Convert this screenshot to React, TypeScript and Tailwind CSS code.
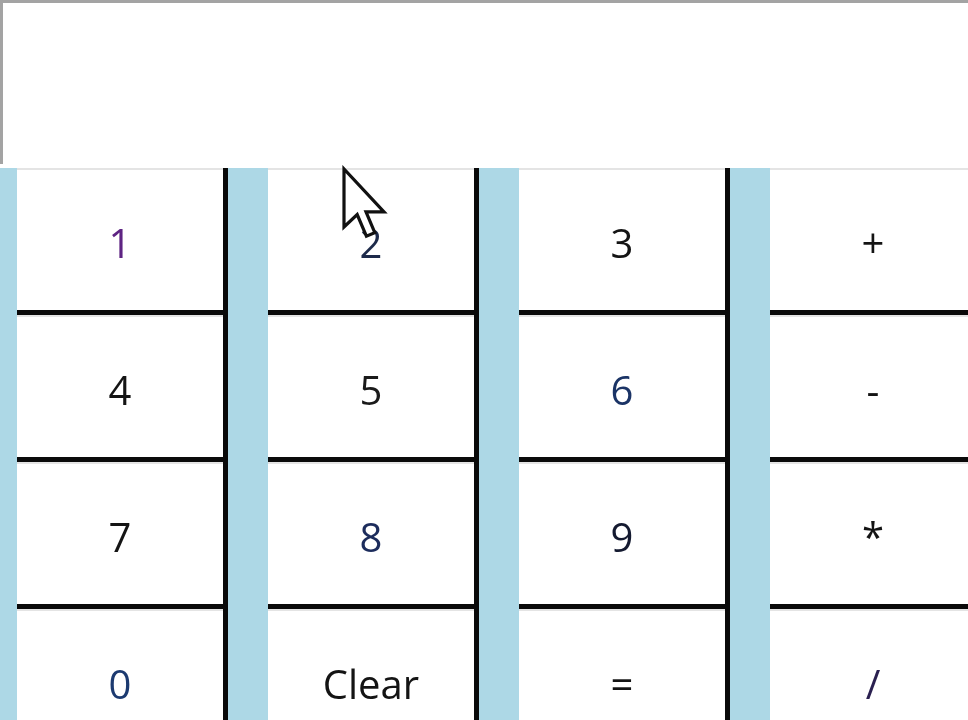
import React from "react";

const rows: { label: string; color: string }[][] = [
  [
    { label: "1", color: "text-[#5e2483]" },
    { label: "2", color: "text-[#1d2a4a]" },
    { label: "3", color: "text-[#141414]" },
    { label: "+", color: "text-[#141414]" },
  ],
  [
    { label: "4", color: "text-[#141414]" },
    { label: "5", color: "text-[#1a1a1a]" },
    { label: "6", color: "text-[#1b3466]" },
    { label: "-", color: "text-[#141414]" },
  ],
  [
    { label: "7", color: "text-[#141414]" },
    { label: "8", color: "text-[#1c2c5c]" },
    { label: "9", color: "text-[#141a30]" },
    { label: "*", color: "text-[#141414]" },
  ],
  [
    { label: "0", color: "text-[#1c3a70]" },
    { label: "Clear", color: "text-[#141414]" },
    { label: "=", color: "text-[#141414]" },
    { label: "/", color: "text-[#2a2050]" },
  ],
];

function Cursor() {
  return (
    <svg
      className="absolute left-[340px] top-[165px]"
      width="52"
      height="80"
      viewBox="0 0 13 20"
    >
      <path
        d="M1 1 L1 15.5 L4.3 12.4 L6.6 17.8 L8.7 16.9 L6.5 11.7 L11 11.7 Z"
        fill="#ffffff"
        stroke="#111111"
        strokeWidth="0.8"
        strokeLinejoin="miter"
      />
    </svg>
  );
}

export default function App() {
  const cols = [0, 1, 2, 3];
  return (
    <div className="relative w-[968px] h-[720px] overflow-hidden bg-white font-['Open_Sans',_'Noto_Sans',_sans-serif]">
      <div className="h-[164px] border-t-[3px] border-l-[3px] border-[#a3a3a3] bg-white" />
      <div className="h-[4px] bg-white" />
      <div className="flex gap-[40px] pl-[17px] bg-[#add8e6] h-[552px]">
        {cols.map((c) => (
          <div key={c} className="flex flex-col shrink-0 w-[211px]">
            {rows.map((r, ri) => (
              <div
                key={ri}
                className="h-[147px] shrink-0 bg-white border-r-[5px] border-b-[5px] border-[#0a0a0a] flex flex-col"
              >
                <div className="h-[2px] bg-[#e4e4e4]" />
                <div className="flex-1 flex items-center justify-center pt-[6px]">
                  <span
                    className={`text-[40px] leading-none blur-[0.5px] ${r[c].color}`}
                  >
                    {r[c].label}
                  </span>
                </div>
              </div>
            ))}
          </div>
        ))}
      </div>
      <Cursor />
    </div>
  );
}
